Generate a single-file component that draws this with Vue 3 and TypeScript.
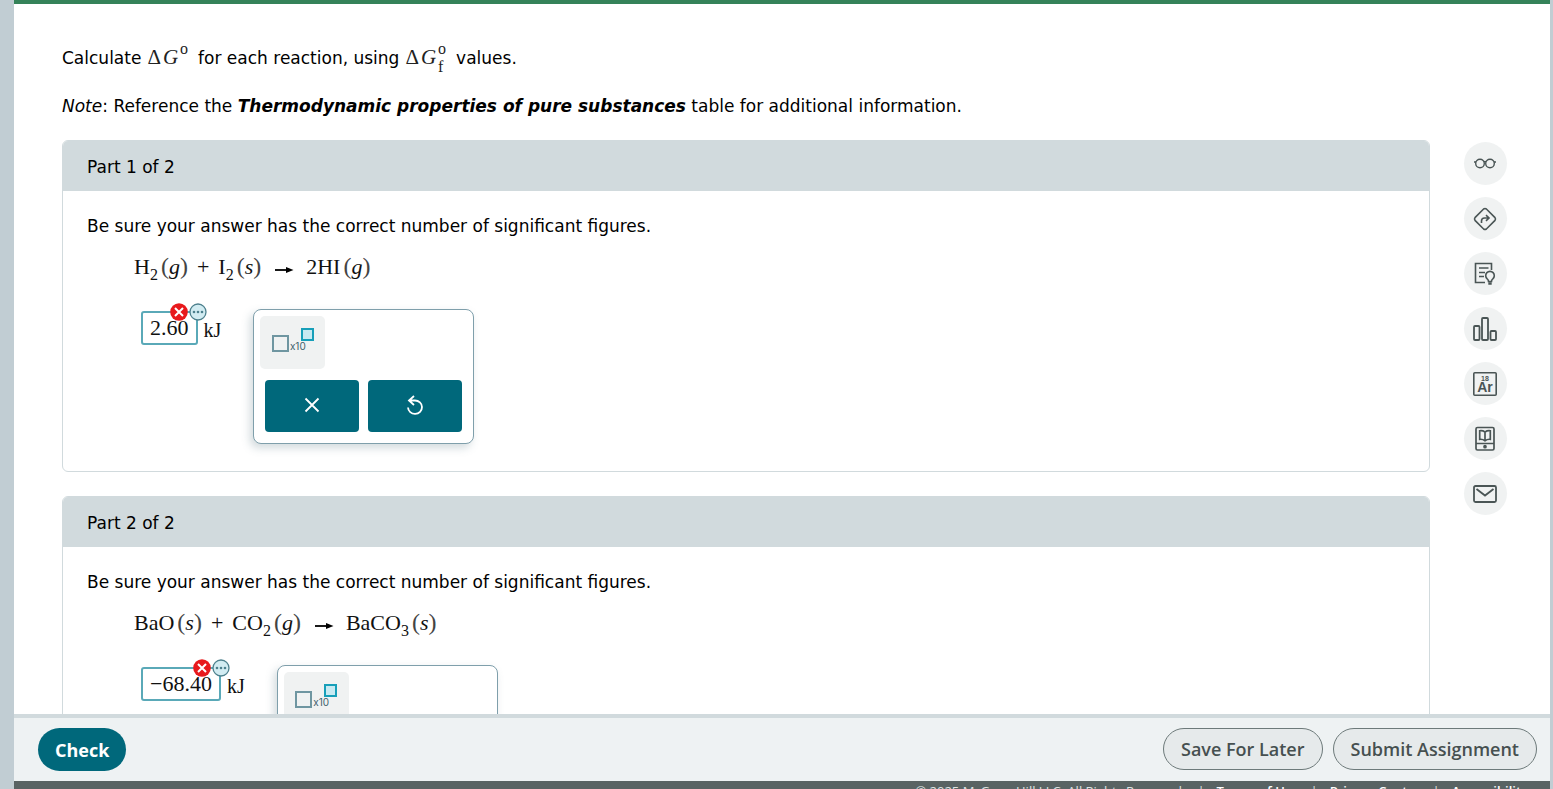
<script setup lang="ts">
import { ref } from 'vue'

type TokenKind = 'text' | 'sub' | 'state' | 'plus' | 'arrow'
interface Token {
  kind: TokenKind
  value: string
}
interface Part {
  id: number
  equation: Token[]
  answer: string
}

const t = (kind: TokenKind, value = ''): Token => ({ kind, value })

const parts = ref<Part[]>([
  {
    id: 1,
    answer: '2.60',
    equation: [
      t('text', 'H'), t('sub', '2'), t('state', 'g'), t('plus'),
      t('text', 'I'), t('sub', '2'), t('state', 's'), t('arrow'),
      t('text', '2HI'), t('state', 'g'),
    ],
  },
  {
    id: 2,
    answer: '−68.40',
    equation: [
      t('text', 'BaO'), t('state', 's'), t('plus'),
      t('text', 'CO'), t('sub', '2'), t('state', 'g'), t('arrow'),
      t('text', 'BaCO'), t('sub', '3'), t('state', 's'),
    ],
  },
])

const tools = ['Reader', 'Guided solution', 'Hint', 'Data', 'Periodic table', 'eBook', 'Message']
const footerLinks = ['Terms of Use', 'Privacy Center', 'Accessibility']
</script>

<template>
  <div class="page">
    <div class="frame">
      <main class="scroll">
        <div class="content">
          <p class="intro">
            <span>Calculate</span>
            <span class="math"><span>Δ</span><i>G</i><span class="scripts"><span>o</span></span></span>
            <span>for each reaction, using</span>
            <span class="math"><span>Δ</span><i>G</i><span class="scripts"><span>o</span><span>f</span></span></span>
            <span>values.</span>
          </p>
          <p class="note">
            <i>Note</i>: Reference the <b>Thermodynamic properties of pure substances</b> table for additional
            information.
          </p>

          <section v-for="part in parts" :key="part.id" class="card">
            <h2 class="card-head">Part {{ part.id }} of 2</h2>
            <div class="card-body">
              <p class="hint">Be sure your answer has the correct number of significant figures.</p>
              <div class="equation">
                <template v-for="(token, i) in part.equation" :key="i">
                  <span v-if="token.kind === 'text'">{{ token.value }}</span>
                  <span v-else-if="token.kind === 'sub'" class="sub">{{ token.value }}</span>
                  <span v-else-if="token.kind === 'state'" class="state">
                    <span class="paren">(</span><i>{{ token.value }}</i><span class="paren">)</span>
                  </span>
                  <span v-else-if="token.kind === 'plus'" class="plus">+</span>
                  <svg v-else class="arrow" viewBox="0 0 20 8" width="20" height="8">
                    <path d="M1 4h13" stroke="#000" stroke-width="1.8" />
                    <path d="M12 1l7.500 3-7.500 3z" fill="#000" />
                  </svg>
                </template>
              </div>

              <div class="work">
                <div class="answer">
                  <div class="field">
                    <input v-model="part.answer" type="text" :aria-label="`Answer for part ${part.id}`" />
                    <svg class="badge wrong" viewBox="0 0 18 18" role="img" aria-label="Incorrect">
                      <circle cx="9" cy="9" r="8.8" fill="#e8191c" />
                      <path d="M5 5l8 8M13 5l-8 8" stroke="#fff" stroke-width="2" />
                    </svg>
                    <button class="badge more" type="button" aria-label="Feedback">
                      <svg viewBox="0 0 18 18">
                        <circle cx="9" cy="9" r="8" fill="#d2ecf2" stroke="#4d808d" stroke-width="1.3" />
                        <g fill="#4d808d">
                          <circle cx="5" cy="9" r="1.3" />
                          <circle cx="9" cy="9" r="1.3" />
                          <circle cx="13" cy="9" r="1.3" />
                        </g>
                      </svg>
                    </button>
                  </div>
                  <span class="unit">kJ</span>
                </div>

                <div class="keypad">
                  <button class="sci" type="button" aria-label="Times ten to a power">
                    <span class="box"></span><span class="ten">x10</span><span class="box exp"></span>
                  </button>
                  <div class="actions">
                    <button type="button" aria-label="Clear">
                      <svg viewBox="0 0 16 16" width="16" height="16">
                        <path d="M1.500 1.500l13 13M14.500 1.500l-13 13" />
                      </svg>
                    </button>
                    <button type="button" aria-label="Reset">
                      <svg viewBox="0 0 18 20" width="18" height="20">
                        <path d="M2 12.500a7 6.700 0 1 0 7-7H3.500M8 1L3 5.500l5 4.500" />
                      </svg>
                    </button>
                  </div>
                </div>
              </div>
            </div>
          </section>
        </div>

        <nav class="rail" aria-label="Tools">
          <button v-for="(tool, i) in tools" :key="tool" type="button" :aria-label="tool">
            <svg viewBox="0 0 26 26" width="26" height="26">
              <g v-if="i === 0" stroke-width="1.400">
                <circle cx="8" cy="12.500" r="4.300" />
                <circle cx="18" cy="12.500" r="4.300" />
                <path d="M12 11q1-1 2 0M2 11h2M22 11h2" />
              </g>
              <g v-else-if="i === 1" stroke-width="1.6">
                <path d="M11.600 3L3 11.600q-1 1.400 0 2.800l8.600 8.600q1.400 1 2.800 0l8.600-8.600q1-1.400 0-2.800L14.400 3q-1.400-1-2.800 0z" />
                <path d="M9.500 17v-2q0-3 3-3h4M14 9.200l3 2.800-3 2.800" />
              </g>
              <g v-else-if="i === 2" stroke-width="1.6">
                <path d="M13 21.500H3.500v-19h16V9" />
                <path d="M7 7h9.500M7 11.500h6M7 15.500h5" />
                <path d="M16.500 20.500q0-1.600-1.300-2.600a4.300 4.300 0 1 1 5.600 0q-1.300 1-1.300 2.600z" />
                <path d="M16.300 22.500h3.400" stroke-width="2.500" />
              </g>
              <g v-else-if="i === 3" stroke-width="1.8">
                <rect x="2" y="10" width="5.500" height="14" rx="1" />
                <rect x="10" y="2" width="6" height="22" rx="1" />
                <rect x="18.500" y="15" width="5.500" height="9" rx="1" />
              </g>
              <g v-else-if="i === 4" stroke-width="1.6">
                <rect x="1.800" y="1.800" width="22.400" height="22.400" rx="1" />
                <text class="number" x="13" y="10">18</text>
                <text class="symbol" x="13" y="21">Ar</text>
              </g>
              <g v-else-if="i === 5" stroke-width="1.700">
                <rect x="4" y="1.500" width="18" height="22.500" rx="1.500" />
                <path d="M4 17.500h18M13 6.500v8M13 6q-2.500-1.700-5.300-1.200v8.500q3-.3 5.300 1.400q2.300-1.700 5.300-1.400V4.800Q15.500 4.300 13 6z" />
                <circle cx="13" cy="20.700" r="1" />
              </g>
              <g v-else stroke-width="1.800">
                <rect x="2" y="5" width="22" height="16" rx="1.500" />
                <path d="M4.500 8l8.500 6.500L21.500 8" />
              </g>
            </svg>
          </button>
        </nav>
      </main>

      <div class="toolbar">
        <button class="pill primary" type="button">Check</button>
        <div class="right">
          <button class="pill" type="button">Save For Later</button>
          <button class="pill" type="button">Submit Assignment</button>
        </div>
      </div>
    </div>

    <footer class="legal">
      <span>© 2025 McGraw Hill LLC. All Rights Reserved.</span>
      <template v-for="link in footerLinks" :key="link">
        <span>|</span>
        <a href="#">{{ link }}</a>
      </template>
    </footer>
  </div>
</template>

<style>
body {
  margin: 0;
  overflow: hidden;
}
</style>

<style scoped>
.page {
  box-sizing: border-box;
  height: 100vh;
  overflow: hidden;
  padding: 0 3px 0 14px;
  background: #c1cdd3;
  font: 17px/24px 'DejaVu Sans', Verdana, sans-serif;
  color: #000;
}
button {
  border: 0;
  padding: 0;
  font: inherit;
  cursor: pointer;
}
.frame {
  box-sizing: border-box;
  display: flex;
  flex-direction: column;
  height: calc(100vh - 8px);
  border-top: 4px solid #358259;
  background: #fff;
}
.scroll {
  display: flex;
  gap: 34px;
  flex: 1;
  min-height: 0;
  overflow: hidden;
  padding: 0 43px 0 48px;
}
.content {
  flex: 1;
  min-width: 0;
  padding-top: 36px;
}
p,
h2 {
  margin: 0;
}
.intro {
  display: flex;
  align-items: baseline;
  gap: 6px;
  height: 36px;
  line-height: 36px;
}
.math {
  display: inline-flex;
  align-items: baseline;
  gap: 2px;
  font: 21px/24px 'Liberation Serif', serif;
  color: #222;
}
.scripts {
  position: relative;
  width: 12px;
  height: 24px;
}
.scripts span {
  position: absolute;
  left: 0;
  top: -3px;
  font-size: 16px;
}
.scripts span + span {
  top: 15px;
}
.note {
  margin: 18px 0 22px;
}
.note b {
  font-style: italic;
}
.card {
  margin-bottom: 24px;
  border: 1px solid #d1dadd;
  border-radius: 6px;
  overflow: hidden;
}
.card-head {
  padding: 14px 24px 12px;
  background: #d1dadd;
  font-size: 17px;
  font-weight: 400;
}
.card-body {
  padding: 23px 24px 27px;
}
.equation {
  display: flex;
  align-items: baseline;
  margin: 13px 0 25px 47px;
  font: 22px/30px 'Liberation Serif', serif;
  color: #111;
}
.sub {
  position: relative;
  top: 6px;
  font-size: 16px;
}
.state {
  display: flex;
  align-items: baseline;
  padding-left: 3px;
}
.paren {
  font-size: 24px;
  color: #444;
}
.plus {
  padding: 0 9px;
}
.arrow {
  align-self: center;
  margin: 4px 12px 0 13px;
}
.work {
  display: flex;
  align-items: flex-start;
  padding-left: 54px;
}
.answer {
  display: flex;
  align-items: center;
  gap: 6px;
  padding-top: 2px;
  font: 22px/30px 'Liberation Serif', serif;
  color: #111;
}
.field {
  position: relative;
  display: flex;
}
.field input {
  field-sizing: content;
  box-sizing: border-box;
  height: 34px;
  padding: 0 7px;
  border: 2px solid #5aa9b8;
  border-radius: 3px;
  background: #fff;
  font: inherit;
  color: #111;
  outline: 0;
}
.badge {
  position: absolute;
  top: -8px;
  width: 18px;
  height: 18px;
}
.wrong {
  right: 10px;
}
.more {
  right: -9px;
  background: none;
}
.more svg {
  display: block;
}
.unit {
  font-size: 20px;
  padding-top: 3px;
}
.keypad {
  box-sizing: border-box;
  width: 221px;
  margin-left: 32px;
  padding: 6px 11px 11px;
  border: 1px solid #7f9fab;
  border-radius: 8px;
  background: #fff;
  box-shadow: -3px 4px 8px rgba(80, 110, 125, 0.25);
}
.sci {
  display: flex;
  align-items: flex-end;
  justify-content: center;
  width: 65px;
  height: 53px;
  margin-left: -5px;
  padding: 0 0 17px;
  border-radius: 5px;
  background: #f0f2f2;
}
.box {
  box-sizing: border-box;
  width: 17px;
  height: 17px;
  border: 2px solid #6f96a1;
}
.ten {
  padding-left: 1px;
  font: 10px/12px Inter, sans-serif;
  color: #41616c;
}
.exp {
  width: 13px;
  height: 13px;
  margin: 0 0 11px -5px;
  border-color: #179fb9;
  background: #c8eaf2;
}
.actions {
  display: grid;
  grid-template-columns: 1fr 1fr;
  gap: 9px;
  margin-top: 11px;
}
.actions button {
  display: grid;
  place-items: center;
  height: 52px;
  padding-bottom: 3px;
  border-radius: 4px;
  background: #00687b;
}
.actions svg {
  fill: none;
  stroke: #fff;
  stroke-width: 1.8;
}
.rail {
  display: flex;
  flex-direction: column;
  gap: 12px;
  padding-top: 138px;
}
.rail button {
  box-sizing: border-box;
  flex: none;
  display: grid;
  place-items: center;
  width: 43px;
  height: 43px;
  padding-right: 1px;
  border-radius: 50%;
  background: #f0f2f2;
}
.rail svg {
  fill: none;
  stroke: #4a5555;
}
.rail text {
  fill: #4a5555;
  stroke: none;
  font-family: 'Liberation Sans', sans-serif;
  font-weight: 700;
  text-anchor: middle;
}
.number {
  font-size: 7px;
}
.symbol {
  font-size: 14px;
}
.toolbar {
  display: flex;
  justify-content: space-between;
  padding: 10px 13px 10px 24px;
  border-top: 4px solid #d1dadd;
  background: #eef2f3;
}
.right {
  display: flex;
  gap: 10px;
}
.pill {
  box-sizing: border-box;
  height: 42px;
  padding: 0 17px;
  border: 1px solid #6d7a7a;
  border-radius: 22px;
  background: #e6eaeb;
  font: 600 18px/24px 'Open Sans', sans-serif;
  color: #465050;
}
.primary {
  height: 43px;
  border: 0;
  background: #00687b;
  font-weight: 700;
  color: #fff;
}
.legal {
  display: flex;
  justify-content: flex-end;
  gap: 12px;
  padding: 1px 22px 0;
  background: #596363;
  font: 13px/18px 'Open Sans', sans-serif;
  color: #dfe4e4;
}
.legal a {
  color: #fff;
  font-weight: 600;
  text-decoration: none;
}
</style>
